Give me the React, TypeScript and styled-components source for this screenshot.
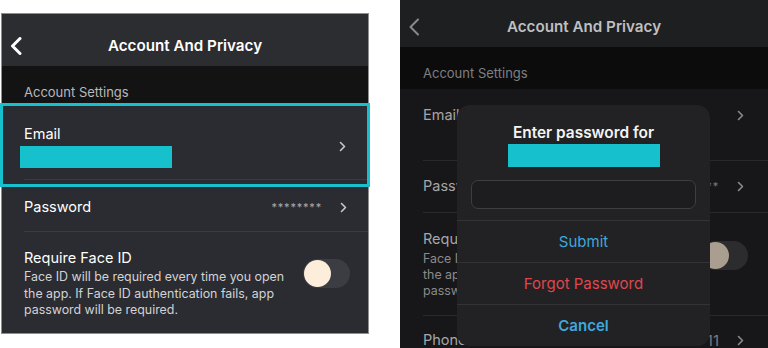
import React from "react";
import styled, { createGlobalStyle, ThemeProvider } from "styled-components";

const Global = createGlobalStyle`
  html, body { margin: 0; padding: 0; background: #ffffff; }
  body {
    width: 768px; height: 348px; overflow: hidden;
    font-family: Inter, "Noto Sans", "Liberation Sans", sans-serif;
    -webkit-font-smoothing: antialiased;
  }
  * { box-sizing: border-box; }
`;

type Pal = {
  headerBg: string; sectionBg: string; rowBg: string; title: string; section: string;
  label: string; desc: string; muted: string; chevron: string; divider: string;
  track: string; knob: string; back: string; backW: number;
  headerH: number; headerPt: number; headerPl: number; sectionH: number; sectionPb: number;
  indent: number; chevR: number; toggleR: number;
};

const lit: Pal = {
  headerBg: "#2b2d31", sectionBg: "#131314", rowBg: "#2a2c31", title: "#ffffff", section: "#b8b9bc",
  label: "#ffffff", desc: "#d3d3d6", muted: "#a9a9ad", chevron: "#c9c9cc", divider: "#3a3c41",
  track: "#3b3d42", knob: "#fdeedb", back: "#ffffff", backW: 3,
  headerH: 52, headerPt: 11, headerPl: 8, sectionH: 37, sectionPb: 3,
  indent: 22, chevR: 21, toggleR: 18,
};

const dim: Pal = {
  headerBg: "#1e1f21", sectionBg: "#0c0c0d", rowBg: "#171719", title: "#bfbfc1", section: "#7f7f82",
  label: "#a6a6a8", desc: "#8b8b8e", muted: "#7a7a7d", chevron: "#8a8a8d", divider: "#29292c",
  track: "#2c2c2f", knob: "#a99e90", back: "#8a8a8d", backW: 2,
  headerH: 47, headerPt: 7, headerPl: 8, sectionH: 42, sectionPb: 8,
  indent: 23, chevR: 24, toggleR: 20,
};

const CYAN = "#17c0cd";

const Stage = styled.div`
  display: flex;
  align-items: flex-start;
  width: 768px;
  height: 348px;
`;

const LeftPhone = styled.div`
  margin: 13px 0 0 1px;
  width: 368px;
  height: 321px;
  border: 1px solid #8e8e90;
  background: ${lit.rowBg};
  display: flex;
  flex-direction: column;
`;

const RightPhone = styled.div`
  position: relative;
  overflow: hidden;
  margin-left: 31px;
  width: 368px;
  height: 348px;
  background: ${dim.rowBg};
  display: flex;
  flex-direction: column;
`;

const Header = styled.div`
  height: ${(p) => p.theme.headerH}px;
  padding-top: ${(p) => p.theme.headerPt}px;
  background: ${(p) => p.theme.headerBg};
  display: grid;
  grid-template-columns: 40px 1fr 40px;
  align-items: center;
  flex-shrink: 0;
`;

const BackBtn = styled.div`
  display: flex;
  align-items: center;
  padding-left: ${(p) => p.theme.headerPl}px;
  color: ${(p) => p.theme.back};
`;

const Title = styled.div`
  text-align: center;
  font-size: 15.2px;
  line-height: 20px;
  font-weight: 600;
  color: ${(p) => p.theme.title};
`;

const Section = styled.div`
  height: ${(p) => p.theme.sectionH}px;
  background: ${(p) => p.theme.sectionBg};
  display: flex;
  align-items: flex-end;
  padding: 0 0 ${(p) => p.theme.sectionPb}px ${(p) => p.theme.indent}px;
  font-size: 13px;
  line-height: 16px;
  color: ${(p) => p.theme.section};
  flex-shrink: 0;
`;

const Highlight = styled.div`
  margin: 0 -2px;
  border: 3px solid ${CYAN};
  padding-bottom: 4px;
`;

const Row = styled.div<{ $pt: number; $pb: number; $divider?: boolean; $indent?: number; $top?: boolean; $padR?: number }>`
  display: flex;
  align-items: ${(p) => (p.$top ? "flex-start" : "center")};
  margin-left: ${(p) => (p.$indent ?? p.theme.indent)}px;
  padding: ${(p) => p.$pt}px ${(p) => p.$padR ?? p.theme.chevR}px ${(p) => p.$pb}px 0;
  border-bottom: ${(p) => (p.$divider ? `1px solid ${p.theme.divider}` : "none")};
  flex-shrink: 0;
`;

const TextCol = styled.div`
  flex: 1;
  display: flex;
  flex-direction: column;
  min-width: 0;
`;

const Label = styled.div`
  font-size: 14.5px;
  line-height: 20px;
  color: ${(p) => p.theme.label};
`;

const Desc = styled.div<{ $gap: number; $lh: number }>`
  margin-top: ${(p) => p.$gap}px;
  font-size: 12.4px;
  line-height: ${(p) => p.$lh}px;
  color: ${(p) => p.theme.desc};
  white-space: nowrap;
`;

const Redact = styled.div<{ $w: number; $h: number; $mt: number; $ml?: number }>`
  width: ${(p) => p.$w}px;
  height: ${(p) => p.$h}px;
  margin-top: ${(p) => p.$mt}px;
  margin-left: ${(p) => p.$ml ?? 0}px;
  background: ${CYAN};
  flex-shrink: 0;
`;

const Value = styled.span<{ $stars?: boolean }>`
  font-size: ${(p) => (p.$stars ? 11 : 15)}px;
  letter-spacing: ${(p) => (p.$stars ? 0.8 : 0)}px;
  color: ${(p) => p.theme.muted};
  margin-right: 18px;
`;

const Chev = styled.span`
  display: flex;
  color: ${(p) => p.theme.chevron};
`;

const Toggle = styled.div<{ $mt: number }>`
  width: 47px;
  height: 29px;
  margin-top: ${(p) => p.$mt}px;
  border-radius: 15px;
  background: ${(p) => p.theme.track};
  display: flex;
  align-items: center;
  padding-left: 1px;
  flex-shrink: 0;
`;

const Knob = styled.div`
  width: 27px;
  height: 27px;
  border-radius: 50%;
  background: ${(p) => p.theme.knob};
`;

const Dialog = styled.div`
  position: absolute;
  left: 57px;
  top: 105px;
  width: 253px;
  height: 241px;
  border-radius: 13px;
  background: #222224;
  display: flex;
  flex-direction: column;
  align-items: center;
  overflow: hidden;
`;

const DialogTitle = styled.div`
  margin-top: 18px;
  font-size: 15.4px;
  line-height: 20px;
  font-weight: 600;
  color: #f4f4f4;
`;

const Field = styled.input`
  margin-top: 13px;
  width: 225px;
  height: 29px;
  border: 1px solid #3e3e41;
  border-radius: 7px;
  background: #1d1d1f;
  outline: none;
  padding: 0 8px;
  color: #fff;
  font: inherit;
`;

const Actions = styled.div`
  margin-top: 11px;
  width: 100%;
  display: flex;
  flex-direction: column;
`;

const Action = styled.div<{ $color: string; $bold?: boolean }>`
  height: 42px;
  border-top: 1px solid #333336;
  display: flex;
  align-items: center;
  justify-content: center;
  font-size: 15px;
  font-weight: ${(p) => (p.$bold ? 600 : 400)};
  color: ${(p) => p.$color};
`;

const BackIcon = ({ w }: { w: number }) => (
  <svg width="12" height="18" viewBox="0 0 12 18" fill="none">
    <path d="M10 1.5 L2.5 9 L10 16.5" stroke="currentColor" strokeWidth={w} strokeLinecap="round" strokeLinejoin="round" />
  </svg>
);

const ChevIcon = () => (
  <Chev>
    <svg width="7" height="11" viewBox="0 0 7 11" fill="none">
      <path d="M1.5 1.5 L5.5 5.5 L1.5 9.5" stroke="currentColor" strokeWidth="1.6" strokeLinecap="round" strokeLinejoin="round" />
    </svg>
  </Chev>
);

const Top = ({ p }: { p: Pal }) => (
  <>
    <Header>
      <BackBtn>
        <BackIcon w={p.backW} />
      </BackBtn>
      <Title>Account And Privacy</Title>
      <div />
    </Header>
    <Section>Account Settings</Section>
  </>
);

export default function App() {
  return (
    <>
      <Global />
      <Stage>
        <ThemeProvider theme={lit}>
          <LeftPhone>
            <Top p={lit} />
            <Highlight>
              <Row $pt={18} $pb={11} $divider $indent={21}>
                <TextCol>
                  <Label>Email</Label>
                  <Redact $w={152} $h={22} $mt={2} $ml={-4} />
                </TextCol>
                <ChevIcon />
              </Row>
            </Highlight>
            <Row $pt={10} $pb={14} $divider>
              <TextCol>
                <Label>Password</Label>
              </TextCol>
              <Value $stars>********</Value>
              <ChevIcon />
            </Row>
            <Row $pt={16} $pb={14} $top $padR={lit.toggleR}>
              <TextCol>
                <Label>Require Face ID</Label>
                <Desc $gap={1} $lh={16.5}>
                  Face ID will be required every time you open
                  <br />
                  the app. If Face ID authentication fails, app
                  <br />
                  password will be required.
                </Desc>
              </TextCol>
              <Toggle $mt={11}>
                <Knob />
              </Toggle>
            </Row>
          </LeftPhone>
        </ThemeProvider>

        <ThemeProvider theme={dim}>
          <RightPhone>
            <Top p={dim} />
            <Row $pt={16} $pb={35} $divider>
              <TextCol>
                <Label>Email</Label>
              </TextCol>
              <ChevIcon />
            </Row>
            <Row $pt={15} $pb={16} $divider>
              <TextCol>
                <Label>Password</Label>
              </TextCol>
              <Value $stars>********</Value>
              <ChevIcon />
            </Row>
            <Row $pt={16} $pb={16} $divider $top $padR={dim.toggleR}>
              <TextCol>
                <Label>Require Face ID</Label>
                <Desc $gap={2} $lh={16}>
                  Face ID will be required every time you open
                  <br />
                  the app. If Face ID authentication fails, app
                  <br />
                  password will be required.
                </Desc>
              </TextCol>
              <Toggle $mt={12}>
                <Knob />
              </Toggle>
            </Row>
            <Row $pt={14} $pb={10}>
              <TextCol>
                <Label>Phone Number</Label>
              </TextCol>
              <Value>+11</Value>
              <ChevIcon />
            </Row>

            <Dialog>
              <DialogTitle>Enter password for</DialogTitle>
              <Redact $w={152} $h={23} $mt={1} />
              <Field type="password" readOnly aria-label="Password" />
              <Actions>
                <Action $color="#3fa8de">Submit</Action>
                <Action $color="#e0474c">Forgot Password</Action>
                <Action $color="#3fa8de" $bold>
                  Cancel
                </Action>
              </Actions>
            </Dialog>
          </RightPhone>
        </ThemeProvider>
      </Stage>
    </>
  );
}
